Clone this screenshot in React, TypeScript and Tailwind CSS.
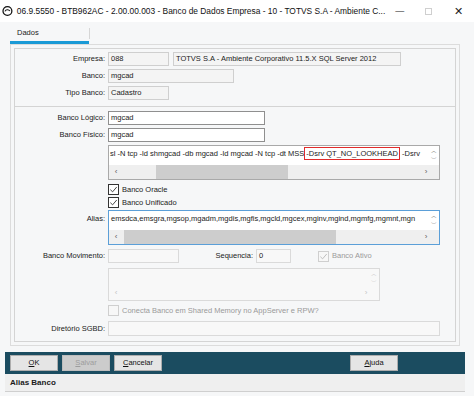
import React from 'react';

const Check = ({ color = '#333' }: { color?: string }) => (
  <svg viewBox="0 0 10 10" className="w-[9px] h-[9px]">
    <path d="M1.5 5.2 L4 7.6 L8.6 2.2" fill="none" stroke={color} strokeWidth="1" />
  </svg>
);

function Checkbox({ label, checked, disabled }: { label: string; checked?: boolean; disabled?: boolean }) {
  return (
    <div className="flex items-center h-[11px]">
      <div
        className={`w-[11px] h-[11px] flex items-center justify-center border ${
          disabled ? 'border-[#cfcfcf] bg-[#f7f7f7]' : 'border-[#333] bg-white'
        }`}
      >
        {checked && <Check color={disabled ? '#b8b8b8' : '#333'} />}
      </div>
      <span className={`ml-[3px] ${disabled ? 'text-[#9a9a9a]' : ''}`}>{label}</span>
    </div>
  );
}

function Input({ w, value, kind = 'ro' }: { w: string; value?: string; kind?: 'ro' | 'edit' | 'off' }) {
  const cls =
    kind === 'edit'
      ? 'border-[#8f8f8f] bg-white'
      : kind === 'off'
        ? 'border-[#dadada] bg-[#f8f8f8]'
        : 'border-[#cfcfcf] bg-[#f4f4f4]';
  return (
    <div className={`${w} h-[14px] border ${cls} flex items-center px-[2px] overflow-hidden whitespace-nowrap`}>
      {value}
    </div>
  );
}

function Memo({
  w,
  h,
  border,
  thumbLeft,
  thumbWidth,
  children,
  disabled,
}: {
  w: string;
  h: string;
  border: string;
  thumbLeft: string;
  thumbWidth: string;
  children?: React.ReactNode;
  disabled?: boolean;
}) {
  const arrow = disabled ? 'text-[#c4c4c4]' : 'text-[#606060]';
  return (
    <div className={`${w} ${h} border ${border} ${disabled ? 'bg-[#f8f8f8]' : 'bg-white'} flex flex-col`}>
      <div className="flex-1 flex min-h-0">
        <div className="flex-1 overflow-hidden whitespace-nowrap pt-[3px] pl-[2px]">{children}</div>
        <div className={`w-[11px] flex flex-col items-center pt-[1px] text-[6px] leading-[8px] ${arrow}`}>
          <span>︿</span>
          <span>﹀</span>
        </div>
      </div>
      <div className={`h-[14px] flex items-center ${disabled ? 'bg-[#f8f8f8]' : 'bg-[#efefef]'}`}>
        <span className={`w-[14px] text-center text-[8px] ${arrow}`}>‹</span>
        <div className="flex-1 h-[14px] relative">
          {!disabled && <div className={`absolute top-0 h-[14px] bg-[#cdcdcd] ${thumbLeft} ${thumbWidth}`} />}
        </div>
        <span className={`w-[14px] text-center text-[8px] ${arrow}`}>›</span>
        <span className="w-[6px]" />
      </div>
    </div>
  );
}

const Label = ({ children, top }: { children: React.ReactNode; top?: boolean }) => (
  <div className={`w-[93px] pr-[3px] text-right shrink-0 ${top ? 'self-start pt-[4px]' : ''}`}>{children}</div>
);

function Btn({ acc, rest, disabled }: { acc: string; rest: string; disabled?: boolean }) {
  return (
    <div
      className={`w-[48px] h-[16px] flex items-center justify-center border ${
        disabled ? 'bg-[#cccccc] border-[#bdbdbd] text-[#9d9d9d]' : 'bg-[#e5e5e5] border-[#adadad] text-[#111]'
      }`}
    >
      <span>
        <span className="underline">{acc}</span>
        {rest}
      </span>
    </div>
  );
}

export default function App() {
  return (
    <div className="w-[474px] h-[396px] overflow-hidden bg-[#f6f7f8] text-[7.5px] leading-[10px] text-[#1b1b1b] font-['Liberation_Sans',Arial,sans-serif] flex flex-col">
      {/* Title bar */}
      <div className="h-[22px] bg-white flex items-center shrink-0">
        <svg viewBox="0 0 12 12" className="w-[12px] h-[12px] ml-[2px]">
          <circle cx="6" cy="6" r="4.9" fill="none" stroke="#111" strokeWidth="1.4" />
          <path d="M3.3 6.4 C4.2 4.2 7.4 4 8.7 6" fill="none" stroke="#111" strokeWidth="1.2" />
        </svg>
        <span className="ml-[4px] text-[8.4px] text-[#111] whitespace-nowrap">
          06.9.5550 - BTB962AC - 2.00.00.003 - Banco de Dados Empresa - 10 - TOTVS S.A - Ambiente C...
        </span>
        <span className="ml-auto w-[32px] text-center text-[#222] text-[9px]">—</span>
        <span className="w-[32px] flex justify-center">
          <span className="w-[7px] h-[7px] border border-[#cfcfcf]" />
        </span>
        <span className="w-[34px] text-center text-[#222] text-[11px]">✕</span>
      </div>

      {/* Tab strip */}
      <div className="h-[22px] flex items-end shrink-0">
        <div className="ml-[10px] w-[79px] h-[22px] flex flex-col">
          <div className="flex-1 flex items-center pl-[7px] pt-[3px]">Dados</div>
          <div className="h-[3px] bg-[#1b9ad6]" />
        </div>
        <div className="w-px h-[11px] bg-[#d6d6d6] mb-[5px]" />
      </div>

      {/* Panel */}
      <div className="ml-[10px] w-[450px] h-[302px] border border-[#dcdcdc] p-[3px] shrink-0">
        <div className="h-full border border-[#d4d4d4] flex flex-col">
          {/* top section */}
          <div className="flex flex-col gap-[3px] pt-[3px] pb-[6px] border-b border-[#d4d4d4]">
            <div className="flex items-center">
              <Label>Empresa:</Label>
              <Input w="w-[61px]" value="088" />
              <div className="w-[4px]" />
              <Input w="w-[228px]" value="TOTVS S.A - Ambiente Corporativo 11.5.X SQL Server 2012" />
            </div>
            <div className="flex items-center">
              <Label>Banco:</Label>
              <Input w="w-[126px]" value="mgcad" />
            </div>
            <div className="flex items-center">
              <Label>Tipo Banco:</Label>
              <Input w="w-[61px]" value="Cadastro" />
            </div>
          </div>

          {/* bottom section */}
          <div className="flex flex-col">
            <div className="flex items-center mt-[4px]">
              <Label>Banco Lógico:</Label>
              <Input w="w-[157px]" value="mgcad" kind="edit" />
            </div>
            <div className="flex items-center mt-[3px]">
              <Label>Banco Físico:</Label>
              <Input w="w-[157px]" value="mgcad" kind="edit" />
            </div>
            <div className="flex mt-[3px]">
              <Label> </Label>
              <Memo w="w-[332px]" h="h-[35px]" border="border-[#a9a9a9]" thumbLeft="left-[33px]" thumbWidth="w-[132px]">
                <span className="-ml-[1px]">
                  sl -N tcp -ld shmgcad -db mgcad -ld mgcad -N tcp -dt MSS
                  <span className="border border-[#e02b2b] px-[1px] py-[1px]">-Dsrv QT_NO_LOOKHEAD</span> -Dsrv
                </span>
              </Memo>
            </div>
            <div className="flex mt-[4px]">
              <Label> </Label>
              <Checkbox label="Banco Oracle" checked />
            </div>
            <div className="flex mt-[2px]">
              <Label> </Label>
              <Checkbox label="Banco Unificado" checked />
            </div>
            <div className="flex mt-[2px]">
              <Label top>Alias:</Label>
              <Memo w="w-[332px]" h="h-[35px]" border="border-[#5b9fd8]" thumbLeft="left-[1px]" thumbWidth="w-[212px]">
                emsdca,emsgra,mgsop,mgadm,mgdis,mgfis,mgcld,mgcex,mginv,mgind,mgmfg,mgmnt,mgn
              </Memo>
            </div>
            <div className="flex items-center mt-[4px]">
              <Label>Banco Movimento:</Label>
              <Input w="w-[71px]" kind="off" />
              <div className="w-[77px] pr-[3px] text-right">Sequencia:</div>
              <Input w="w-[35px]" value="0" kind="off" />
              <div className="ml-[27px]">
                <Checkbox label="Banco Ativo" checked disabled />
              </div>
            </div>
            <div className="flex mt-[5px]">
              <Label> </Label>
              <Memo w="w-[272px]" h="h-[33px]" border="border-[#dadada]" thumbLeft="left-0" thumbWidth="w-0" disabled />
            </div>
            <div className="flex mt-[4px]">
              <Label> </Label>
              <Checkbox label="Conecta Banco em Shared Memory no AppServer e RPW?" disabled />
            </div>
            <div className="flex items-center mt-[5px]">
              <Label>Diretório SGBD:</Label>
              <div className="w-[332px] h-[15px] border border-[#dadada] bg-[#f8f8f8]" />
            </div>
          </div>
        </div>
      </div>

      {/* Button bar */}
      <div className="ml-[5px] w-[460px] h-[22px] mt-[6px] bg-[#1b4c60] flex items-center pl-[5px] gap-[4px] shrink-0">
        <Btn acc="O" rest="K" />
        <Btn acc="S" rest="alvar" disabled />
        <Btn acc="C" rest="ancelar" />
        <div className="ml-[184px]">
          <Btn acc="A" rest="juda" />
        </div>
      </div>
      <div className="ml-[5px] w-[460px] h-[18px] bg-[#efefef] flex items-center pl-[5px] font-bold text-[8px] border-b border-[#cfcfcf] shrink-0">
        Alias Banco
      </div>
    </div>
  );
}
